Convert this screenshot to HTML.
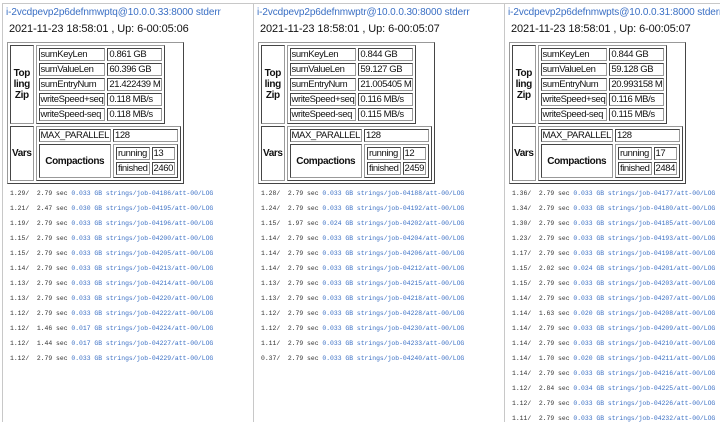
<!DOCTYPE html>
<html><head><meta charset="utf-8"><style>
body{margin:0;background:#fff;width:720px;height:421px;overflow:hidden;position:relative;font-family:"Liberation Sans",sans-serif;font-size:11px;color:#111}
.p{position:absolute;top:3px;height:418px;overflow:hidden;width:250px;border-left:1px solid #c8c8c8;border-top:1px solid #c8c8c8}
.h{position:absolute;left:3px;top:3px;color:#3a6fc4;font-size:10px;letter-spacing:-0.1px;white-space:nowrap}
.d{position:absolute;left:6px;top:19px;font-size:11px;letter-spacing:-0.1px;white-space:nowrap}
table{border-collapse:separate;border-spacing:2px;border:1px outset #999;font-size:9.5px;letter-spacing:-0.4px}
td{border:1px inset #999;padding:0 1px;line-height:11px;white-space:nowrap}
.o{position:absolute;left:4px;top:38px}
.n{border:none;padding:0}
.b{font-weight:bold;text-align:center;font-size:10px}
.logs{position:absolute;left:7px;top:182px;font-family:"Liberation Mono",monospace;font-size:6.4px;line-height:15px;white-space:pre;color:#333}
.logs span{color:#3a6fc4}
</style></head><body>

<div class="p" style="left:2px">
<div class="h">i-2vcdpevp2p6defnmwptq@10.0.0.33:8000 stderr</div>
<div class="d">2021-11-23 18:58:01 , Up: 6-00:05:06</div>
<table class="o"><tr><td class="b">Top<br>ling<br>Zip</td><td class="n"><table>
<tr><td>sumKeyLen</td><td>0.861 GB</td></tr><tr><td>sumValueLen</td><td>60.396 GB</td></tr><tr><td>sumEntryNum</td><td>21.422439 M</td></tr><tr><td>writeSpeed+seq</td><td>0.118 MB/s</td></tr><tr><td>writeSpeed-seq</td><td>0.118 MB/s</td></tr></table></td></tr>
<tr><td class="b">Vars</td><td class="n"><table><tr><td>MAX_PARALLEL</td><td>128</td></tr><tr><td class="b">Compactions</td><td class="n"><table><tr><td>running</td><td>13</td></tr><tr><td>finished</td><td>2460</td></tr></table></td></tr></table></td></tr></table>
<div class="logs">1.29/  2.79 sec <span>0.033 GB strings/job-04186/att-00/LOG</span>
1.21/  2.47 sec <span>0.030 GB strings/job-04195/att-00/LOG</span>
1.19/  2.79 sec <span>0.033 GB strings/job-04196/att-00/LOG</span>
1.15/  2.79 sec <span>0.033 GB strings/job-04200/att-00/LOG</span>
1.15/  2.79 sec <span>0.033 GB strings/job-04205/att-00/LOG</span>
1.14/  2.79 sec <span>0.033 GB strings/job-04213/att-00/LOG</span>
1.13/  2.79 sec <span>0.033 GB strings/job-04214/att-00/LOG</span>
1.13/  2.79 sec <span>0.033 GB strings/job-04220/att-00/LOG</span>
1.12/  2.79 sec <span>0.033 GB strings/job-04222/att-00/LOG</span>
1.12/  1.46 sec <span>0.017 GB strings/job-04224/att-00/LOG</span>
1.12/  1.44 sec <span>0.017 GB strings/job-04227/att-00/LOG</span>
1.12/  2.79 sec <span>0.033 GB strings/job-04229/att-00/LOG</span></div>
</div>

<div class="p" style="left:253px">
<div class="h">i-2vcdpevp2p6defnmwptr@10.0.0.30:8000 stderr</div>
<div class="d">2021-11-23 18:58:01 , Up: 6-00:05:07</div>
<table class="o"><tr><td class="b">Top<br>ling<br>Zip</td><td class="n"><table>
<tr><td>sumKeyLen</td><td>0.844 GB</td></tr><tr><td>sumValueLen</td><td>59.127 GB</td></tr><tr><td>sumEntryNum</td><td>21.005405 M</td></tr><tr><td>writeSpeed+seq</td><td>0.116 MB/s</td></tr><tr><td>writeSpeed-seq</td><td>0.115 MB/s</td></tr></table></td></tr>
<tr><td class="b">Vars</td><td class="n"><table><tr><td>MAX_PARALLEL</td><td>128</td></tr><tr><td class="b">Compactions</td><td class="n"><table><tr><td>running</td><td>12</td></tr><tr><td>finished</td><td>2459</td></tr></table></td></tr></table></td></tr></table>
<div class="logs">1.28/  2.79 sec <span>0.033 GB strings/job-04188/att-00/LOG</span>
1.24/  2.79 sec <span>0.033 GB strings/job-04192/att-00/LOG</span>
1.15/  1.97 sec <span>0.024 GB strings/job-04202/att-00/LOG</span>
1.14/  2.79 sec <span>0.033 GB strings/job-04204/att-00/LOG</span>
1.14/  2.79 sec <span>0.033 GB strings/job-04206/att-00/LOG</span>
1.14/  2.79 sec <span>0.033 GB strings/job-04212/att-00/LOG</span>
1.13/  2.79 sec <span>0.033 GB strings/job-04215/att-00/LOG</span>
1.13/  2.79 sec <span>0.033 GB strings/job-04218/att-00/LOG</span>
1.12/  2.79 sec <span>0.033 GB strings/job-04228/att-00/LOG</span>
1.12/  2.79 sec <span>0.033 GB strings/job-04230/att-00/LOG</span>
1.11/  2.79 sec <span>0.033 GB strings/job-04233/att-00/LOG</span>
0.37/  2.79 sec <span>0.033 GB strings/job-04240/att-00/LOG</span></div>
</div>

<div class="p" style="left:504px;width:216px">
<div class="h">i-2vcdpevp2p6defnmwpts@10.0.0.31:8000 stderr</div>
<div class="d">2021-11-23 18:58:01 , Up: 6-00:05:07</div>
<table class="o"><tr><td class="b">Top<br>ling<br>Zip</td><td class="n"><table>
<tr><td>sumKeyLen</td><td>0.844 GB</td></tr><tr><td>sumValueLen</td><td>59.128 GB</td></tr><tr><td>sumEntryNum</td><td>20.993158 M</td></tr><tr><td>writeSpeed+seq</td><td>0.116 MB/s</td></tr><tr><td>writeSpeed-seq</td><td>0.115 MB/s</td></tr></table></td></tr>
<tr><td class="b">Vars</td><td class="n"><table><tr><td>MAX_PARALLEL</td><td>128</td></tr><tr><td class="b">Compactions</td><td class="n"><table><tr><td>running</td><td>17</td></tr><tr><td>finished</td><td>2484</td></tr></table></td></tr></table></td></tr></table>
<div class="logs">1.36/  2.79 sec <span>0.033 GB strings/job-04177/att-00/LOG</span>
1.34/  2.79 sec <span>0.033 GB strings/job-04180/att-00/LOG</span>
1.30/  2.79 sec <span>0.033 GB strings/job-04185/att-00/LOG</span>
1.23/  2.79 sec <span>0.033 GB strings/job-04193/att-00/LOG</span>
1.17/  2.79 sec <span>0.033 GB strings/job-04198/att-00/LOG</span>
1.15/  2.02 sec <span>0.024 GB strings/job-04201/att-00/LOG</span>
1.15/  2.79 sec <span>0.033 GB strings/job-04203/att-00/LOG</span>
1.14/  2.79 sec <span>0.033 GB strings/job-04207/att-00/LOG</span>
1.14/  1.63 sec <span>0.020 GB strings/job-04208/att-00/LOG</span>
1.14/  2.79 sec <span>0.033 GB strings/job-04209/att-00/LOG</span>
1.14/  2.79 sec <span>0.033 GB strings/job-04210/att-00/LOG</span>
1.14/  1.70 sec <span>0.020 GB strings/job-04211/att-00/LOG</span>
1.14/  2.79 sec <span>0.033 GB strings/job-04216/att-00/LOG</span>
1.12/  2.84 sec <span>0.034 GB strings/job-04225/att-00/LOG</span>
1.12/  2.79 sec <span>0.033 GB strings/job-04226/att-00/LOG</span>
1.11/  2.79 sec <span>0.033 GB strings/job-04232/att-00/LOG</span></div>
</div>
</body></html>
